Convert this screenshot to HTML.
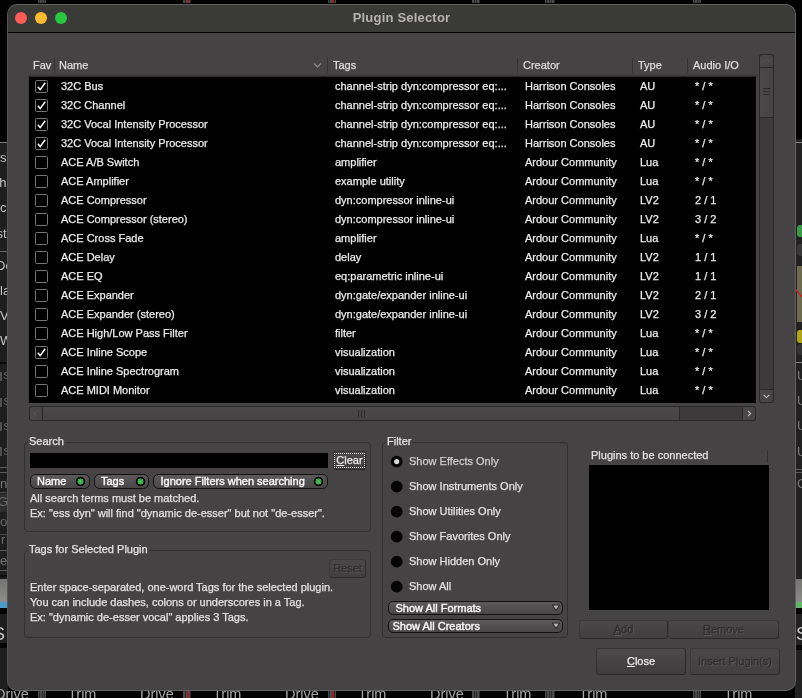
<!DOCTYPE html>
<html>
<head>
<meta charset="utf-8">
<title>Plugin Selector</title>
<style>
*{box-sizing:border-box;margin:0;padding:0}
html,body{width:802px;height:698px;overflow:hidden;background:#020202}
body{font-family:"Liberation Sans",sans-serif;font-size:11px;color:#e8e8e8;position:relative}
.abs{position:absolute}
#bg{position:absolute;left:0;top:0;width:802px;height:698px;background:#020202;overflow:hidden;will-change:transform}
#win{will-change:transform;position:absolute;left:7px;top:4px;width:789px;height:687px;background:#454344;border-radius:10px;border:1px solid #626262;border-left-color:#555;overflow:hidden}
#tbar{position:absolute;left:0;top:0;width:100%;height:28px;background:#3a3a38;border-bottom:1px solid #000}
#title{position:absolute;left:0;top:5px;width:100%;text-align:center;font-weight:bold;font-size:13px;color:#b6b4b3;letter-spacing:0.2px}
.tl{position:absolute;top:7px;width:12px;height:12px;border-radius:50%}
.t{position:absolute;white-space:nowrap;line-height:14px;height:14px;color:#e2e2e2;-webkit-text-stroke-width:0.25px}
.hd{color:#dedede;font-size:11px;-webkit-text-stroke-width:0.25px}
.sep{position:absolute;top:58px;width:1px;height:15px;background:#343334}
#list{position:absolute;left:29px;top:76px;width:727px;height:327px;background:#000;overflow:hidden;border-top:1px solid #2a292a}
.row{position:absolute;left:0;width:727px;height:19px}
.row span{position:absolute;top:2px;line-height:14px;white-space:nowrap;color:#ececec;-webkit-text-stroke-width:0.25px}
.c1{left:32px}.c2{left:306px}.c3{left:496px}.c4{left:611px}.c5{left:666px}
.cb{position:absolute;left:6px;top:3px;width:13px;height:13px;border:1px solid #767676;border-radius:1.5px;background:#000}
.cb svg{position:absolute;left:-1px;top:-1px}
.frame{position:absolute;border:1px solid #323132;border-radius:4px}
.flabel{position:absolute;background:#454344;padding:0 1px;line-height:14px;height:14px;color:#e4e4e4;white-space:nowrap;-webkit-text-stroke-width:0.25px}
.btn{position:absolute;-webkit-text-stroke-width:0.25px;border:1px solid;border-color:#353334 #2b2a2b #282728 #333132;border-radius:3px;background:linear-gradient(#4b494a,#3f3d3e);text-align:center;color:#ececec;white-space:nowrap}
.btn.dis{color:#302f30;text-shadow:1px 1px 0 #5b595a;border-color:#3d3b3c #2f2e2f #2d2c2d #3b393a;background:linear-gradient(#494748,#413f40)}
.tog{position:absolute;height:15px;border:1px solid #121212;border-radius:5.5px;background:linear-gradient(#5c5a5b,#474546);color:#f6f6f6;-webkit-text-stroke-width:0.4px;white-space:nowrap;line-height:13px;font-size:11px}
.led{position:absolute;top:1px;width:11px;height:11px;border-radius:50%;background:radial-gradient(circle at 50% 50%,#52c45e 0,#3aae4a 2.2px,#36a846 2.8px,#0b0b0b 3.3px,#0b0b0b 4.6px,rgba(11,11,11,0) 5.1px)}
.rad{position:absolute;left:390px;width:13px;height:13px;border-radius:50%;background:#060606;border:1px solid #1c1b1c}
.rad.on:after{content:"";position:absolute;left:3px;top:3px;width:5px;height:5px;border-radius:50%;background:#d6d6d6}
.dd{position:absolute;left:388px;width:175px;height:14px;border:1px solid #121212;border-radius:5px;background:linear-gradient(#5c5a5b,#474546);color:#f6f6f6;-webkit-text-stroke-width:0.4px;white-space:nowrap;line-height:12px;font-size:11px;padding-left:5px}

.sb{position:absolute;background:#3c3a3b;border:1px solid #2a292a;border-radius:3px}
.sbp{position:absolute;background:linear-gradient(90deg,#4a4849,#454344);border:1px solid #2a292a}
u{text-decoration-thickness:0.8px;text-underline-offset:0.5px}
</style>
</head>
<body>
<div id="bg">
<div class="abs" style="left:0px;top:142px;width:8px;height:556px;background:#1e1e1e;"></div>
<div class="abs" style="left:0px;top:142px;width:8px;height:1px;background:#777;"></div>
<div class="abs" style="right:795.5px;top:149.5px;font-size:13px;line-height:15px;color:#c4c4c4;white-space:nowrap;text-align:right">Bus</div>
<div class="abs" style="right:795.5px;top:174.5px;font-size:13px;line-height:15px;color:#c4c4c4;white-space:nowrap;text-align:right">Mach</div>
<div class="abs" style="right:795.5px;top:199.5px;font-size:13px;line-height:15px;color:#c4c4c4;white-space:nowrap;text-align:right">Music</div>
<div class="abs" style="right:795.5px;top:225.5px;font-size:13px;line-height:15px;color:#c4c4c4;white-space:nowrap;text-align:right">Test</div>
<div class="abs" style="left:0px;top:251px;width:8px;height:1px;background:#666;"></div>
<div class="abs" style="left:-4px;top:258px;font-size:13px;line-height:15px;color:#c4c4c4;white-space:nowrap;">De</div>
<div class="abs" style="left:0px;top:283px;font-size:13px;line-height:15px;color:#c4c4c4;white-space:nowrap;">la</div>
<div class="abs" style="left:0px;top:307.5px;font-size:13px;line-height:15px;color:#c4c4c4;white-space:nowrap;">V</div>
<div class="abs" style="left:0px;top:332.5px;font-size:13px;line-height:15px;color:#c4c4c4;white-space:nowrap;">W</div>
<div class="abs" style="left:0px;top:362px;width:8px;height:2px;background:#0c0c0c;"></div>
<div class="abs" style="left:0px;top:371.7px;width:2px;height:9px;background:#505050;"></div>
<div class="abs" style="left:3.5px;top:367.2px;font-size:13px;line-height:15px;color:#6a6a6a;white-space:nowrap;">s</div>
<div class="abs" style="left:0px;top:397.5px;width:2px;height:9px;background:#505050;"></div>
<div class="abs" style="left:3.5px;top:393px;font-size:13px;line-height:15px;color:#6a6a6a;white-space:nowrap;">s</div>
<div class="abs" style="left:0px;top:422.4px;width:2px;height:9px;background:#505050;"></div>
<div class="abs" style="left:3.5px;top:417.9px;font-size:13px;line-height:15px;color:#6a6a6a;white-space:nowrap;">s</div>
<div class="abs" style="left:0px;top:447.3px;width:2px;height:9px;background:#505050;"></div>
<div class="abs" style="left:3.5px;top:442.8px;font-size:13px;line-height:15px;color:#6a6a6a;white-space:nowrap;">s</div>
<div class="abs" style="left:0px;top:467px;width:8px;height:1px;background:#5a5a5a;"></div>
<div class="abs" style="left:0px;top:472px;width:8px;height:1px;background:#5a5a5a;"></div>
<div class="abs" style="left:0px;top:475.5px;font-size:13px;line-height:15px;color:#777;white-space:nowrap;">n</div>
<div class="abs" style="left:0px;top:492px;width:8px;height:1px;background:#484848;"></div>
<div class="abs" style="left:0px;top:494px;width:8px;height:18px;background:#2e2e2e;"></div>
<div class="abs" style="left:-2px;top:493.5px;font-size:13px;line-height:15px;color:#6a6a6a;white-space:nowrap;">G</div>
<div class="abs" style="left:0px;top:514px;font-size:13px;line-height:15px;color:#6a6a6a;white-space:nowrap;">o</div>
<div class="abs" style="left:0px;top:534px;width:8px;height:1px;background:#484848;"></div>
<div class="abs" style="left:1px;top:532px;font-size:13px;line-height:15px;color:#6a6a6a;white-space:nowrap;">r</div>
<div class="abs" style="left:0px;top:550px;width:8px;height:1px;background:#5a5a5a;"></div>
<div class="abs" style="left:0px;top:570px;width:8px;height:1px;background:#5a5a5a;"></div>
<div class="abs" style="left:0px;top:552.5px;font-size:13px;line-height:15px;color:#777;white-space:nowrap;">el</div>
<div class="abs" style="left:0px;top:575px;width:8px;height:2px;background:#0c0c0c;"></div>
<div class="abs" style="left:0px;top:579px;width:8px;height:23px;background:linear-gradient(#747472,#8c8c8a);"></div>
<div class="abs" style="left:0px;top:602px;width:8px;height:6px;background:#4a9cc8;"></div>
<div class="abs" style="left:0px;top:608px;width:8px;height:6px;background:#050505;"></div>
<div class="abs" style="left:-7px;top:623.5px;font-size:18px;line-height:20px;color:#c8c8c8;white-space:nowrap;">S</div>
<div class="abs" style="left:0px;top:643px;width:8px;height:5px;background:#050505;"></div>
<div class="abs" style="left:795px;top:139px;width:8px;height:559px;background:#212121;"></div>
<div class="abs" style="left:795px;top:141.5px;width:8px;height:1px;background:#8a8a8a;"></div>
<div class="abs" style="left:796.5px;top:225px;width:8px;height:12px;background:#3a9a48;border-radius:3px"></div>
<div class="abs" style="left:796.5px;top:244px;width:8px;height:12px;background:#383838;border-radius:3px"></div>
<div class="abs" style="left:796.5px;top:266px;width:8px;height:56px;background:#6e6a50;"></div>
<svg class="abs" style="left:796px;top:288px" width="6" height="12"><path d="M0 2 L6 9" stroke="#c02020" stroke-width="1.4"/></svg>
<div class="abs" style="left:796.5px;top:329.5px;width:8px;height:13px;background:#b0a418;border-radius:3px"></div>
<div class="abs" style="left:796.5px;top:344px;width:8px;height:11px;background:#333;border-radius:3px"></div>
<div class="abs" style="left:795px;top:362px;width:8px;height:1px;background:#888;"></div>
<div class="abs" style="left:797px;top:367.5px;font-size:13px;line-height:15px;color:#787878;white-space:nowrap;">U</div>
<div class="abs" style="left:797px;top:392.9px;font-size:13px;line-height:15px;color:#787878;white-space:nowrap;">U</div>
<div class="abs" style="left:797px;top:418.1px;font-size:13px;line-height:15px;color:#787878;white-space:nowrap;">U</div>
<div class="abs" style="left:797px;top:443.5px;font-size:13px;line-height:15px;color:#787878;white-space:nowrap;">U</div>
<div class="abs" style="left:795px;top:468.5px;width:8px;height:1px;background:#5a5a5a;"></div>
<div class="abs" style="left:795px;top:472px;width:8px;height:1px;background:#5a5a5a;"></div>
<div class="abs" style="left:797px;top:475.5px;font-size:13px;line-height:15px;color:#777;white-space:nowrap;">C</div>
<div class="abs" style="left:795px;top:578.5px;width:8px;height:23px;background:linear-gradient(#747472,#8c8c8a);"></div>
<div class="abs" style="left:795px;top:601.5px;width:8px;height:6px;background:#62b466;"></div>
<div class="abs" style="left:795px;top:607.5px;width:8px;height:6px;background:#050505;"></div>
<div class="abs" style="left:796px;top:624px;font-size:18px;line-height:20px;color:#c8c8c8;white-space:nowrap;">S</div>
<div class="abs" style="left:795px;top:645px;width:8px;height:5px;background:#050505;"></div>
<div class="abs" style="left:-5px;top:686px;font-size:14.5px;line-height:16.5px;color:#a8a8a8;white-space:nowrap;">Drive</div>
<div class="abs" style="left:140px;top:686px;font-size:14.5px;line-height:16.5px;color:#a8a8a8;white-space:nowrap;">Drive</div>
<div class="abs" style="left:285px;top:686px;font-size:14.5px;line-height:16.5px;color:#a8a8a8;white-space:nowrap;">Drive</div>
<div class="abs" style="left:430px;top:686px;font-size:14.5px;line-height:16.5px;color:#a8a8a8;white-space:nowrap;">Drive</div>
<div class="abs" style="left:68px;top:686px;font-size:14.5px;line-height:16.5px;color:#a8a8a8;white-space:nowrap;">Trim</div>
<div class="abs" style="left:213px;top:686px;font-size:14.5px;line-height:16.5px;color:#a8a8a8;white-space:nowrap;">Trim</div>
<div class="abs" style="left:358px;top:686px;font-size:14.5px;line-height:16.5px;color:#a8a8a8;white-space:nowrap;">Trim</div>
<div class="abs" style="left:503px;top:686px;font-size:14.5px;line-height:16.5px;color:#a8a8a8;white-space:nowrap;">Trim</div>
<div class="abs" style="left:579px;top:686px;font-size:14.5px;line-height:16.5px;color:#a8a8a8;white-space:nowrap;">Trim</div>
<div class="abs" style="left:724px;top:686px;font-size:14.5px;line-height:16.5px;color:#a8a8a8;white-space:nowrap;">Trim</div>
<div class="abs" style="left:37.5px;top:691px;width:8.5px;height:8px;background:repeating-linear-gradient(90deg,#4a4a4a 0,#4a4a4a 1.5px,#2a2a2a 1.5px,#2a2a2a 2.5px);"></div>
<div class="abs" style="left:37.5px;top:0px;width:8.5px;height:3px;background:repeating-linear-gradient(90deg,#4a4a4a 0,#4a4a4a 1.5px,#2a2a2a 1.5px,#2a2a2a 2.5px);"></div>
<div class="abs" style="left:182.7px;top:691px;width:8.6px;height:8px;background:repeating-linear-gradient(90deg,#4a4a4a 0,#4a4a4a 1.5px,#2a2a2a 1.5px,#2a2a2a 2.5px);"></div>
<div class="abs" style="left:182.7px;top:0px;width:8.6px;height:3px;background:repeating-linear-gradient(90deg,#4a4a4a 0,#4a4a4a 1.5px,#2a2a2a 1.5px,#2a2a2a 2.5px);"></div>
<div class="abs" style="left:187.2px;top:691px;width:1.5px;height:8px;background:#a02020;"></div>
<div class="abs" style="left:187.2px;top:0px;width:1.5px;height:3px;background:#a02020;"></div>
<div class="abs" style="left:327.7px;top:691px;width:8.5px;height:8px;background:repeating-linear-gradient(90deg,#4a4a4a 0,#4a4a4a 1.5px,#2a2a2a 1.5px,#2a2a2a 2.5px);"></div>
<div class="abs" style="left:327.7px;top:0px;width:8.5px;height:3px;background:repeating-linear-gradient(90deg,#4a4a4a 0,#4a4a4a 1.5px,#2a2a2a 1.5px,#2a2a2a 2.5px);"></div>
<div class="abs" style="left:332.2px;top:691px;width:1.5px;height:8px;background:#a02020;"></div>
<div class="abs" style="left:332.2px;top:0px;width:1.5px;height:3px;background:#a02020;"></div>
<div class="abs" style="left:472px;top:691px;width:8px;height:8px;background:repeating-linear-gradient(90deg,#4a4a4a 0,#4a4a4a 1.5px,#2a2a2a 1.5px,#2a2a2a 2.5px);"></div>
<div class="abs" style="left:472px;top:0px;width:8px;height:3px;background:repeating-linear-gradient(90deg,#4a4a4a 0,#4a4a4a 1.5px,#2a2a2a 1.5px,#2a2a2a 2.5px);"></div>
<div class="abs" style="left:545px;top:691px;width:10px;height:8px;background:repeating-linear-gradient(90deg,#4a4a4a 0,#4a4a4a 1.5px,#2a2a2a 1.5px,#2a2a2a 2.5px);"></div>
<div class="abs" style="left:545px;top:0px;width:10px;height:3px;background:repeating-linear-gradient(90deg,#4a4a4a 0,#4a4a4a 1.5px,#2a2a2a 1.5px,#2a2a2a 2.5px);"></div>
<div class="abs" style="left:693px;top:691px;width:8px;height:8px;background:repeating-linear-gradient(90deg,#4a4a4a 0,#4a4a4a 1.5px,#2a2a2a 1.5px,#2a2a2a 2.5px);"></div>
<div class="abs" style="left:693px;top:0px;width:8px;height:3px;background:repeating-linear-gradient(90deg,#4a4a4a 0,#4a4a4a 1.5px,#2a2a2a 1.5px,#2a2a2a 2.5px);"></div>
</div>
<div id="win">
  <div id="tbar">
    <div class="tl" style="left:7px;background:#fb5c55"></div>
    <div class="tl" style="left:27px;background:#fdbc30"></div>
    <div class="tl" style="left:47px;background:#28c73f"></div>
    <div id="title">Plugin Selector</div>
  </div>
</div>
<div id="content" class="abs" style="left:0;top:0;width:802px;height:698px;will-change:transform">
  <div class="t hd" style="left:33px;top:58px">Fav</div>
  <div class="t hd" style="left:59px;top:58px">Name</div>
  <div class="t hd" style="left:333px;top:58px">Tags</div>
  <div class="t hd" style="left:523px;top:58px">Creator</div>
  <div class="t hd" style="left:638px;top:58px">Type</div>
  <div class="t hd" style="left:693px;top:58px">Audio I/O</div>
  <div class="sep" style="left:54px"></div>
  <div class="sep" style="left:327px"></div>
  <div class="sep" style="left:517px"></div>
  <div class="sep" style="left:632px"></div>
  <div class="sep" style="left:687px"></div>
  <svg class="abs" style="left:313px;top:62px" width="9" height="7"><path d="M1.2 1.5 L4.5 5 L7.8 1.5" fill="none" stroke="#8c8a8b" stroke-width="1.2"/></svg>
  <div class="abs" style="left:28px;top:73px;width:729px;height:4px;background:linear-gradient(rgba(56,54,55,0),#383637)"></div>
  <div class="abs" style="left:28px;top:77px;width:1px;height:326px;background:#3a3839"></div>
  <div id="list">
<div class="row" style="top:0px"><div class="cb"><svg width="13" height="13" viewBox="0 0 13 13"><path d="M2.8 6.8 L5.2 9.6 L10.2 2.8" fill="none" stroke="#fff" stroke-width="1.5"/></svg></div><span class="c1">32C Bus</span><span class="c2">channel-strip dyn:compressor eq:...</span><span class="c3">Harrison Consoles</span><span class="c4">AU</span><span class="c5">* / *</span></div>
<div class="row" style="top:19px"><div class="cb"><svg width="13" height="13" viewBox="0 0 13 13"><path d="M2.8 6.8 L5.2 9.6 L10.2 2.8" fill="none" stroke="#fff" stroke-width="1.5"/></svg></div><span class="c1">32C Channel</span><span class="c2">channel-strip dyn:compressor eq:...</span><span class="c3">Harrison Consoles</span><span class="c4">AU</span><span class="c5">* / *</span></div>
<div class="row" style="top:38px"><div class="cb"><svg width="13" height="13" viewBox="0 0 13 13"><path d="M2.8 6.8 L5.2 9.6 L10.2 2.8" fill="none" stroke="#fff" stroke-width="1.5"/></svg></div><span class="c1">32C Vocal Intensity Processor</span><span class="c2">channel-strip dyn:compressor eq:...</span><span class="c3">Harrison Consoles</span><span class="c4">AU</span><span class="c5">* / *</span></div>
<div class="row" style="top:57px"><div class="cb"><svg width="13" height="13" viewBox="0 0 13 13"><path d="M2.8 6.8 L5.2 9.6 L10.2 2.8" fill="none" stroke="#fff" stroke-width="1.5"/></svg></div><span class="c1">32C Vocal Intensity Processor</span><span class="c2">channel-strip dyn:compressor eq:...</span><span class="c3">Harrison Consoles</span><span class="c4">AU</span><span class="c5">* / *</span></div>
<div class="row" style="top:76px"><div class="cb"></div><span class="c1">ACE A/B Switch</span><span class="c2">amplifier</span><span class="c3">Ardour Community</span><span class="c4">Lua</span><span class="c5">* / *</span></div>
<div class="row" style="top:95px"><div class="cb"></div><span class="c1">ACE Amplifier</span><span class="c2">example utility</span><span class="c3">Ardour Community</span><span class="c4">Lua</span><span class="c5">* / *</span></div>
<div class="row" style="top:114px"><div class="cb"></div><span class="c1">ACE Compressor</span><span class="c2">dyn:compressor inline-ui</span><span class="c3">Ardour Community</span><span class="c4">LV2</span><span class="c5">2 / 1</span></div>
<div class="row" style="top:133px"><div class="cb"></div><span class="c1">ACE Compressor (stereo)</span><span class="c2">dyn:compressor inline-ui</span><span class="c3">Ardour Community</span><span class="c4">LV2</span><span class="c5">3 / 2</span></div>
<div class="row" style="top:152px"><div class="cb"></div><span class="c1">ACE Cross Fade</span><span class="c2">amplifier</span><span class="c3">Ardour Community</span><span class="c4">Lua</span><span class="c5">* / *</span></div>
<div class="row" style="top:171px"><div class="cb"></div><span class="c1">ACE Delay</span><span class="c2">delay</span><span class="c3">Ardour Community</span><span class="c4">LV2</span><span class="c5">1 / 1</span></div>
<div class="row" style="top:190px"><div class="cb"></div><span class="c1">ACE EQ</span><span class="c2">eq:parametric inline-ui</span><span class="c3">Ardour Community</span><span class="c4">LV2</span><span class="c5">1 / 1</span></div>
<div class="row" style="top:209px"><div class="cb"></div><span class="c1">ACE Expander</span><span class="c2">dyn:gate/expander inline-ui</span><span class="c3">Ardour Community</span><span class="c4">LV2</span><span class="c5">2 / 1</span></div>
<div class="row" style="top:228px"><div class="cb"></div><span class="c1">ACE Expander (stereo)</span><span class="c2">dyn:gate/expander inline-ui</span><span class="c3">Ardour Community</span><span class="c4">LV2</span><span class="c5">3 / 2</span></div>
<div class="row" style="top:247px"><div class="cb"></div><span class="c1">ACE High/Low Pass Filter</span><span class="c2">filter</span><span class="c3">Ardour Community</span><span class="c4">Lua</span><span class="c5">* / *</span></div>
<div class="row" style="top:266px"><div class="cb"><svg width="13" height="13" viewBox="0 0 13 13"><path d="M2.8 6.8 L5.2 9.6 L10.2 2.8" fill="none" stroke="#fff" stroke-width="1.5"/></svg></div><span class="c1">ACE Inline Scope</span><span class="c2">visualization</span><span class="c3">Ardour Community</span><span class="c4">Lua</span><span class="c5">* / *</span></div>
<div class="row" style="top:285px"><div class="cb"></div><span class="c1">ACE Inline Spectrogram</span><span class="c2">visualization</span><span class="c3">Ardour Community</span><span class="c4">Lua</span><span class="c5">* / *</span></div>
<div class="row" style="top:304px"><div class="cb"></div><span class="c1">ACE MIDI Monitor</span><span class="c2">visualization</span><span class="c3">Ardour Community</span><span class="c4">Lua</span><span class="c5">* / *</span></div>
  </div>

  <!-- vertical scrollbar -->
  <div class="sb" style="left:759px;top:54px;width:15px;height:349px"></div>
  <div class="sbp" style="left:759px;top:54px;width:15px;height:14px;border-radius:3px 3px 0 0"></div>
  <svg class="abs" style="left:762px;top:57px" width="9" height="7"><path d="M1.6 4.8 L4.5 2.1 L7.4 4.8" fill="none" stroke="#585657" stroke-width="1"/></svg>
  <div class="sbp" style="left:759px;top:67px;width:15px;height:51px"></div>
  <div class="abs" style="left:763px;top:88px;width:7px;height:1px;background:#2c2b2c;box-shadow:0 3px 0 #2c2b2c,0 6px 0 #2c2b2c"></div>
  <div class="sbp" style="left:759px;top:389px;width:15px;height:14px;border-radius:0 0 3px 3px"></div>
  <svg class="abs" style="left:762px;top:393px" width="9" height="7"><path d="M1.6 1.8 L4.5 4.6 L7.4 1.8" fill="none" stroke="#c0c0c0" stroke-width="1.1"/></svg>
  <!-- horizontal scrollbar -->
  <div class="sb" style="left:29px;top:406px;width:727px;height:15px"></div>
  <div class="sbp" style="left:29px;top:406px;width:14px;height:15px;border-radius:3px 0 0 3px"></div>
  <svg class="abs" style="left:32px;top:409px" width="7" height="9"><path d="M4.8 1.8 L2.1 4.5 L4.8 7.2" fill="none" stroke="#585657" stroke-width="1"/></svg>
  <div class="sbp" style="left:42px;top:406px;width:638px;height:15px;background:linear-gradient(#4a4849,#454344)"></div>
  <div class="abs" style="left:358px;top:410px;width:1px;height:7px;background:#2c2b2c;box-shadow:3px 0 0 #2c2b2c,6px 0 0 #2c2b2c"></div>
  <div class="sbp" style="left:742px;top:406px;width:14px;height:15px;border-radius:0 3px 3px 0"></div>
  <svg class="abs" style="left:746px;top:409px" width="7" height="9"><path d="M2 1.8 L4.7 4.5 L2 7.2" fill="none" stroke="#c0c0c0" stroke-width="1.1"/></svg>

  <!-- Search frame -->
  <div class="frame" style="left:24px;top:442px;width:347px;height:90px"></div>
  <div class="flabel" style="left:28px;top:434px">Search</div>
  <div class="abs" style="left:30px;top:453px;width:298px;height:15px;background:#000"></div>
  <div class="btn" style="left:333px;top:451px;width:33px;height:19px;line-height:17px"><u>C</u>lear</div>
  <div class="abs" style="left:334px;top:453px;width:30.5px;height:15px;border:1px dotted #e8e8e8"></div>
  <div class="tog" style="left:30px;top:474px;width:60px;padding-left:6px">Name<div class="led" style="left:44px"></div></div>
  <div class="tog" style="left:94px;top:474px;width:55px;padding-left:6px">Tags<div class="led" style="left:39.5px"></div></div>
  <div class="tog" style="left:153px;top:474px;width:175px;padding-left:6.5px">Ignore Filters when searching<div class="led" style="left:159px"></div></div>
  <div class="t" style="left:30px;top:491px">All search terms must be matched.</div>
  <div class="t" style="left:30px;top:506px">Ex: "ess dyn" will find "dynamic de-esser" but not "de-esser".</div>

  <!-- Tags frame -->
  <div class="frame" style="left:24px;top:550px;width:347px;height:88px"></div>
  <div class="flabel" style="left:28px;top:542px">Tags for Selected Plugin</div>
  <div class="btn dis" style="left:329px;top:559px;width:37px;height:19px;line-height:17px">Reset</div>
  <div class="t" style="left:30px;top:580px">Enter space-separated, one-word Tags for the selected plugin.</div>
  <div class="t" style="left:30px;top:595px">You can include dashes, colons or underscores in a Tag.</div>
  <div class="t" style="left:30px;top:610px">Ex: "dynamic de-esser vocal" applies 3 Tags.</div>

  <!-- Filter frame -->
  <div class="frame" style="left:382px;top:442px;width:186px;height:196px"></div>
  <div class="flabel" style="left:386px;top:434px">Filter</div>
  <svg class="abs" style="left:389px;top:454px" width="16" height="16"><circle cx="7.7" cy="7.6" r="5.9" fill="#050505"/><circle cx="7.7" cy="7.6" r="2.6" fill="#d8d8d8"/></svg><div class="t" style="left:409px;top:454px;color:#cfcfcf">Show Effects Only</div>
  <svg class="abs" style="left:389px;top:479px" width="16" height="16"><circle cx="7.7" cy="7.6" r="5.9" fill="#050505"/></svg><div class="t" style="left:409px;top:479px">Show Instruments Only</div>
  <svg class="abs" style="left:389px;top:504px" width="16" height="16"><circle cx="7.7" cy="7.6" r="5.9" fill="#050505"/></svg><div class="t" style="left:409px;top:504px">Show Utilities Only</div>
  <svg class="abs" style="left:389px;top:529px" width="16" height="16"><circle cx="7.7" cy="7.6" r="5.9" fill="#050505"/></svg><div class="t" style="left:409px;top:529px">Show Favorites Only</div>
  <svg class="abs" style="left:389px;top:554px" width="16" height="16"><circle cx="7.7" cy="7.6" r="5.9" fill="#050505"/></svg><div class="t" style="left:409px;top:554px">Show Hidden Only</div>
  <svg class="abs" style="left:389px;top:579px" width="16" height="16"><circle cx="7.7" cy="7.6" r="5.9" fill="#050505"/></svg><div class="t" style="left:409px;top:579px">Show All</div>
  <div class="dd" style="top:601px;padding-left:6.5px">Show All Formats<svg class="abs" style="right:1.5px;top:2px" width="10" height="8" viewBox="0 0 10 8"><path d="M0.8 0.7 H9.2 L5 7.2 Z" fill="#1a1a1a"/><path d="M2.2 1.5 H7.8 L5 5.8 Z" fill="#b4b4b4"/></svg></div>
  <div class="dd" style="top:619px;padding-left:3.5px">Show All Creators<svg class="abs" style="right:1.5px;top:2px" width="10" height="8" viewBox="0 0 10 8"><path d="M0.8 0.7 H9.2 L5 7.2 Z" fill="#1a1a1a"/><path d="M2.2 1.5 H7.8 L5 5.8 Z" fill="#b4b4b4"/></svg></div>

  <!-- Plugins to be connected -->
  <div class="t" style="left:591px;top:448px">Plugins to be connected</div>
  <div class="abs" style="left:767px;top:450px;width:1px;height:13px;background:#343334"></div>
  <div class="abs" style="left:589px;top:465px;width:180px;height:145px;background:#000"></div>
  <div class="btn dis" style="left:579px;top:620px;width:89px;height:19px;line-height:17px"><u>A</u>dd</div>
  <div class="btn dis" style="left:668px;top:620px;width:111px;height:19px;line-height:17px"><u>R</u>emove</div>
  <div class="btn" style="left:596px;top:648px;width:90px;height:27px;line-height:25px"><u>C</u>lose</div>
  <div class="btn dis" style="left:690px;top:648px;width:90px;height:27px;line-height:25px">Insert Plugin(s)</div>
</div>
</body>
</html>
